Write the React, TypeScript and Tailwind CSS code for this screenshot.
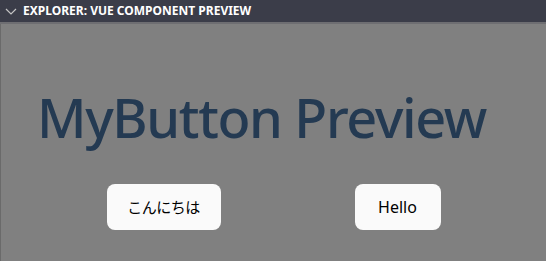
export default function App() {
  return (
    <div className="w-[546px] h-[261px] flex flex-col bg-[#808080] overflow-hidden" style={{ fontFamily: '"Noto Sans", "Open Sans", sans-serif' }}>
      {/* Panel header */}
      <div className="h-[22px] shrink-0 flex items-center bg-[#3b3d49] text-white">
        <svg width="22" height="22" viewBox="0 0 22 22" className="shrink-0">
          <path d="M6 9 L11 14 L16 9" fill="none" stroke="#c5c5c5" strokeWidth="1.2" />
        </svg>
        <span className="ml-[1px] text-[12px] font-bold leading-none">EXPLORER: VUE COMPONENT PREVIEW</span>
      </div>
      <div className="h-[2px] shrink-0 bg-[#6e6e72]" />

      {/* Preview area */}
      <div className="flex-1 flex flex-col items-center border-l border-[#6a6a6a]">
        <h1 className="mt-[66px] mr-[24px] text-[54px] leading-none font-medium text-[#243a52] tracking-tight">MyButton Preview</h1>
        <div className="mt-[40px] flex justify-center gap-[134px]">
          <button className="w-[114px] h-[46px] rounded-lg bg-[#fafafa] text-black text-[15px] tracking-[-0.5px]" style={{ fontFamily: '"Noto Sans CJK JP", sans-serif' }}>こんにちは</button>
          <button className="w-[86px] h-[46px] rounded-lg bg-[#fafafa] text-black text-[16px]">Hello</button>
        </div>
      </div>
    </div>
  );
}
